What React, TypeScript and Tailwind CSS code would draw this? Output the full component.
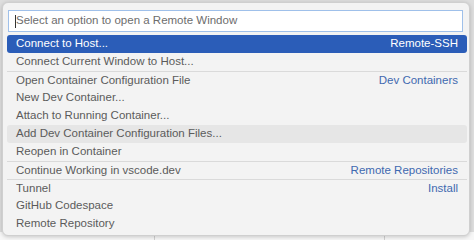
import React from "react";

type Row = { label: string; desc?: string; sep?: boolean; active?: boolean; hover?: boolean };

const rows: Row[] = [
  { label: "Connect to Host...", desc: "Remote-SSH", active: true },
  { label: "Connect Current Window to Host..." },
  { label: "Open Container Configuration File", desc: "Dev Containers", sep: true },
  { label: "New Dev Container..." },
  { label: "Attach to Running Container..." },
  { label: "Add Dev Container Configuration Files...", hover: true },
  { label: "Reopen in Container" },
  { label: "Continue Working in vscode.dev", desc: "Remote Repositories", sep: true },
  { label: "Tunnel", desc: "Install", sep: true },
  { label: "GitHub Codespace" },
  { label: "Remote Repository" },
];

export default function App() {
  return (
    <div
      className="relative w-[474px] h-[240px] overflow-hidden bg-[#dedede]"
      style={{ fontFamily: "'Liberation Sans', Arial, sans-serif" }}
    >
      <div className="absolute left-0 right-0 bottom-0 h-[8px] bg-[#f7f7f7] flex">
        <div className="w-[155px] border-r border-[#d0d0d0]" />
        <div className="w-[230px] border-r border-[#d0d0d0]" />
      </div>
      <div className="absolute left-[2px] top-[2px] w-[468px] h-[234px] rounded-[6px] bg-[#f3f3f3] border border-[#cfcfcf] shadow-[0_1px_4px_rgba(0,0,0,0.2)] flex flex-col">
        <div className="mt-[7px] ml-[5px] mr-[6px] h-[22px] bg-white border border-[#9fc0ea] flex items-center pl-[6px]">
          <span className="w-px h-[13px] bg-[#333]" />
          <span className="text-[11.5px] text-[#6d6d6d] leading-none">Select an option to open a Remote Window</span>
        </div>
        <div className="mt-[3px] ml-[4px] mr-[2px] flex flex-col">
          {rows.map((r, i) => (
            <div
              key={i}
              className={
                "h-[18px] flex items-center justify-between px-[9px] text-[11.5px] leading-none " +
                (r.active
                  ? "bg-[#2b5db8] text-white rounded-[3px]"
                  : r.hover
                  ? "bg-[#e6e6e6] text-[#5b5b5b] rounded-[3px]"
                  : "text-[#5b5b5b]") +
                (r.sep ? " border-t border-[#dadada]" : "")
              }
            >
              <span>{r.label}</span>
              {r.desc && (
                <span className={r.active ? "text-white" : "text-[#3f69b0]"}>{r.desc}</span>
              )}
            </div>
          ))}
        </div>
      </div>
    </div>
  );
}
